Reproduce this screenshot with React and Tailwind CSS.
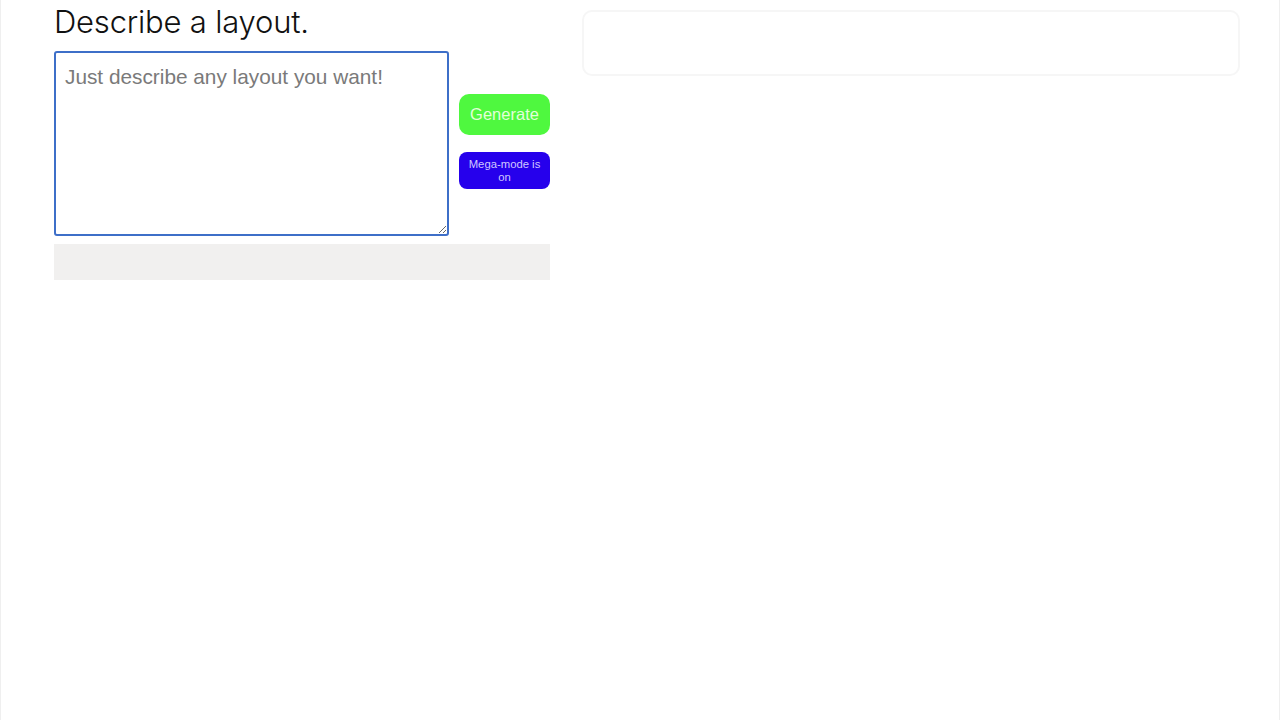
export default function App() {
  return (
    <div className="min-h-screen bg-white border-x border-[#efefef] relative" style={{ fontFamily: '"Liberation Sans", Arial, sans-serif' }}>
      <div className="flex items-start gap-[32px] pl-[53px] pr-[39px]">
        {/* left column */}
        <div className="w-[496px] shrink-0">
          <h1 className="font-['Inter',sans-serif] font-light text-[31px] leading-[40px] text-[#111] pt-[2px] tracking-[-0.2px]">
            Describe a layout.
          </h1>
          <div className="flex items-start gap-[10px] mt-[9px]">
            <textarea
              placeholder="Just describe any layout you want!"
              className="w-[395px] h-[185px] border-2 border-[#3e6fc8] rounded-[3px] pl-[9px] pt-[10px] text-[20.8px] leading-[28px] text-[#333] placeholder:text-[#7a7a7a] outline-none resize-y font-['Liberation_Sans',Arial,sans-serif]"
            />
            <div className="flex flex-col gap-[17px] pt-[43px] w-[91px]">
              <button className="h-[41px] rounded-[10px] bg-[#4ff83f] text-[#e2ffd9] text-[16.5px] font-['Liberation_Sans',Arial,sans-serif]">
                Generate
              </button>
              <button className="h-[37px] rounded-[8px] bg-[#2600ec] text-[#cfc6ff] text-[11.3px] leading-[13px] px-[4px] font-medium font-['Liberation_Sans',Arial,sans-serif]">
                Mega-mode is on
              </button>
            </div>
          </div>
          <div className="mt-[8px] h-[36px] w-[496px] bg-[#f1f0ef]" />
        </div>
        {/* right column */}
        <div className="flex-1 mt-[10px] h-[66px] rounded-[10px] border-2 border-[#f6f6f6]" />
      </div>
    </div>
  );
}
